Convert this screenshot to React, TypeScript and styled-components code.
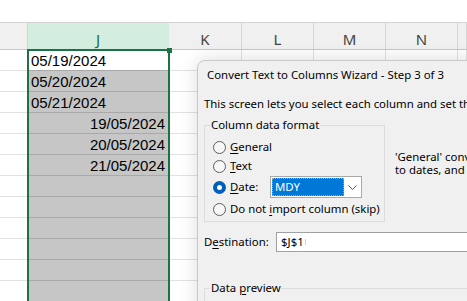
import React from 'react';
import styled, { createGlobalStyle } from 'styled-components';

const GlobalStyle = createGlobalStyle`
	html, body {
		margin: 0;
		padding: 0;
		background: #fff;
		overflow: hidden;
	}
`;

const COLS = '28px 141px 73px 72px 72px 72px 1fr';
const GREEN = '#1e7145';
const UI_FONT = `'Noto Sans', 'Open Sans', sans-serif`;

const Page = styled.div`
	position: relative;
	width: 467px;
	height: 301px;
	overflow: hidden;
	font-family: 'Liberation Sans', Arial, sans-serif;
`;

const TopStrip = styled.div`
	height: 22px;
	background: #fff;
`;

const HeaderRow = styled.div`
	display: grid;
	grid-template-columns: ${COLS};
	height: 27px;
	border-top: 1px solid #d4d4d4;
`;

const HeaderCell = styled.div<{ $active?: boolean }>`
	display: flex;
	align-items: flex-end;
	justify-content: center;
	background: ${(p) => (p.$active ? '#d3eddf' : '#f0f0f0')};
	border-right: 1px solid ${(p) => (p.$active ? '#d3eddf' : '#d6d6d6')};
	border-bottom: 1px solid ${(p) => (p.$active ? GREEN : '#c8c8c8')};
	font-family: ${UI_FONT};
	font-size: 15px;
	line-height: 18px;
	padding-bottom: 1px;
	color: ${(p) => (p.$active ? '#1f6a45' : '#444')};
`;

const Row = styled.div`
	display: grid;
	grid-template-columns: ${COLS};
	height: 21px;
`;

const Cell = styled.div<{ $sel?: boolean; $active?: boolean; $right?: boolean }>`
	display: flex;
	align-items: flex-end;
	justify-content: ${(p) => (p.$right ? 'flex-end' : 'flex-start')};
	padding: 0 3px 1px 3px;
	box-sizing: border-box;
	background: ${(p) => (p.$sel && !p.$active ? '#c6c6c6' : '#fff')};
	border-right: 1px solid #e1e1e1;
	border-bottom: 1px solid ${(p) => (p.$sel ? '#a9a9a9' : '#e1e1e1')};
	font-size: 15px;
	line-height: 17px;
	color: #000;
	white-space: nowrap;
`;

const SelectionFrame = styled.div`
	position: absolute;
	left: 27px;
	top: 49px;
	width: 143px;
	height: 260px;
	box-sizing: border-box;
	border: 2px solid ${GREEN};
	pointer-events: none;
`;

const FillHandle = styled.div`
	position: absolute;
	left: 167px;
	top: 48px;
	width: 5px;
	height: 5px;
	background: ${GREEN};
`;

const Dialog = styled.div`
	position: absolute;
	left: 197px;
	top: 60px;
	width: 300px;
	height: 270px;
	box-sizing: border-box;
	background: #f0f0f0;
	border: 1px solid #c9c9c9;
	border-radius: 8px;
	box-shadow: 0 0 18px rgba(0, 0, 0, 0.14);
	padding: 6px 0 0 6px;
	font-family: ${UI_FONT};
	font-size: 11.4px;
	line-height: 16px;
	color: #000;
	white-space: nowrap;
`;

const Title = styled.div`
	padding-left: 3px;
`;

const Intro = styled.div`
	margin-top: 13px;
`;

const FormatRow = styled.div`
	display: flex;
	align-items: flex-start;
	margin-top: 5px;
`;

const Group = styled.fieldset<{ $w?: number }>`
	margin: 0;
	flex-shrink: 0;
	width: ${(p) => (p.$w ? `${p.$w}px` : 'auto')};
	box-sizing: border-box;
	border: 1px solid #dcdcdc;
	padding: 0 6px 2px 6px;
	min-width: 0;
	legend {
		padding: 0 1px;
		margin-left: -1px;
		line-height: 16px;
	}
`;

const Options = styled.div`
	display: flex;
	flex-direction: column;
	gap: 1px;
	padding: 5px 0 0 2px;
`;

const Option = styled.label<{ $h: number }>`
	display: flex;
	align-items: center;
	height: ${(p) => p.$h}px;
	gap: 4px;
`;

const Radio = styled.span<{ $on?: boolean }>`
	width: 13px;
	height: 13px;
	box-sizing: border-box;
	border-radius: 50%;
	flex-shrink: 0;
	border: ${(p) => (p.$on ? `4px solid #005fb8` : '1px solid #5c5c5c')};
	background: ${(p) => (p.$on ? '#fff' : '#f7f7f7')};
`;

const DateLabel = styled.span`
	width: 36px;
	flex-shrink: 0;
`;

const Combo = styled.div`
	display: flex;
	align-items: stretch;
	flex-shrink: 0;
	width: 92px;
	height: 22px;
	box-sizing: border-box;
	border: 1px solid #a9a9a9;
	background: #fff;
	padding: 1px;
`;

const ComboValue = styled.div`
	flex: 1;
	display: flex;
	align-items: center;
	padding-left: 2px;
	background: #0078d7;
	color: #fff;
	border: 1px dotted #d59a5b;
`;

const ComboArrow = styled.div`
	width: 16px;
	display: flex;
	align-items: center;
	justify-content: center;
`;

const Note = styled.div`
	flex-shrink: 0;
	margin: 33px 0 0 10px;
	line-height: 13px;
`;

const DestRow = styled.div`
	display: flex;
	align-items: center;
	margin-top: 10px;
`;

const DestLabel = styled.span`
	width: 72px;
	flex-shrink: 0;
`;

const TextBox = styled.div`
	flex: 1;
	height: 20px;
	box-sizing: border-box;
	display: flex;
	align-items: center;
	padding-left: 4px;
	background: #fff;
	border: 1px solid #a0a0a0;
	border-right: none;
`;

const Caret = styled.span`
	width: 1px;
	height: 6px;
	background: #6ff;
	margin-left: 1px;
`;

const PreviewGroup = styled(Group)`
	margin-top: 28px;
	height: 60px;
`;

const Key = styled.u`
	text-underline-offset: 2px;
`;

const dates = [
	{ v: '05/19/2024', right: false },
	{ v: '05/20/2024', right: false },
	{ v: '05/21/2024', right: false },
	{ v: '19/05/2024', right: true },
	{ v: '20/05/2024', right: true },
	{ v: '21/05/2024', right: true },
];

const letters = ['', 'J', 'K', 'L', 'M', 'N', ''];

export default function App(): JSX.Element {
	const rows = Array.from({ length: 12 }, (_, i) => dates[i] || { v: '', right: false });

	return (
		<Page>
			<GlobalStyle />
			<TopStrip />
			<HeaderRow>
				{letters.map((l, i) => (
					<HeaderCell key={i} $active={l === 'J'}>
						{l}
					</HeaderCell>
				))}
			</HeaderRow>
			{rows.map((r, i) => (
				<Row key={i}>
					<Cell />
					<Cell $sel $active={i === 0} $right={r.right}>
						{r.v}
					</Cell>
					<Cell />
					<Cell />
					<Cell />
					<Cell />
					<Cell />
				</Row>
			))}
			<SelectionFrame />
			<FillHandle />

			<Dialog>
				<Title>Convert Text to Columns Wizard - Step 3 of 3</Title>
				<Intro>This screen lets you select each column and set the Data Format.</Intro>
				<FormatRow>
					<Group $w={181}>
						<legend>Column data format</legend>
						<Options>
							<Option $h={18}>
								<Radio />
								<span>
									<Key>G</Key>eneral
								</span>
							</Option>
							<Option $h={18}>
								<Radio />
								<span>
									<Key>T</Key>ext
								</span>
							</Option>
							<Option $h={22}>
								<Radio $on />
								<DateLabel>
									<Key>D</Key>ate:
								</DateLabel>
								<Combo>
									<ComboValue>MDY</ComboValue>
									<ComboArrow>
										<svg width="9" height="5" viewBox="0 0 9 5">
											<path d="M0.5 0.5 L4.5 4.5 L8.5 0.5" fill="none" stroke="#555" strokeWidth="1" />
										</svg>
									</ComboArrow>
								</Combo>
							</Option>
							<Option $h={20}>
								<Radio />
								<span>
									Do not <Key>i</Key>mport column (skip)
								</span>
							</Option>
						</Options>
					</Group>
					<Note>
						'General' converts numeric values to numbers,
						<br />
						to dates, and all remaining values to text.
					</Note>
				</FormatRow>
				<DestRow>
					<DestLabel>
						D<Key>e</Key>stination:
					</DestLabel>
					<TextBox>
						$J$1
						<Caret />
					</TextBox>
				</DestRow>
				<PreviewGroup>
					<legend>
						Data <Key>p</Key>review
					</legend>
				</PreviewGroup>
			</Dialog>
		</Page>
	);
}
